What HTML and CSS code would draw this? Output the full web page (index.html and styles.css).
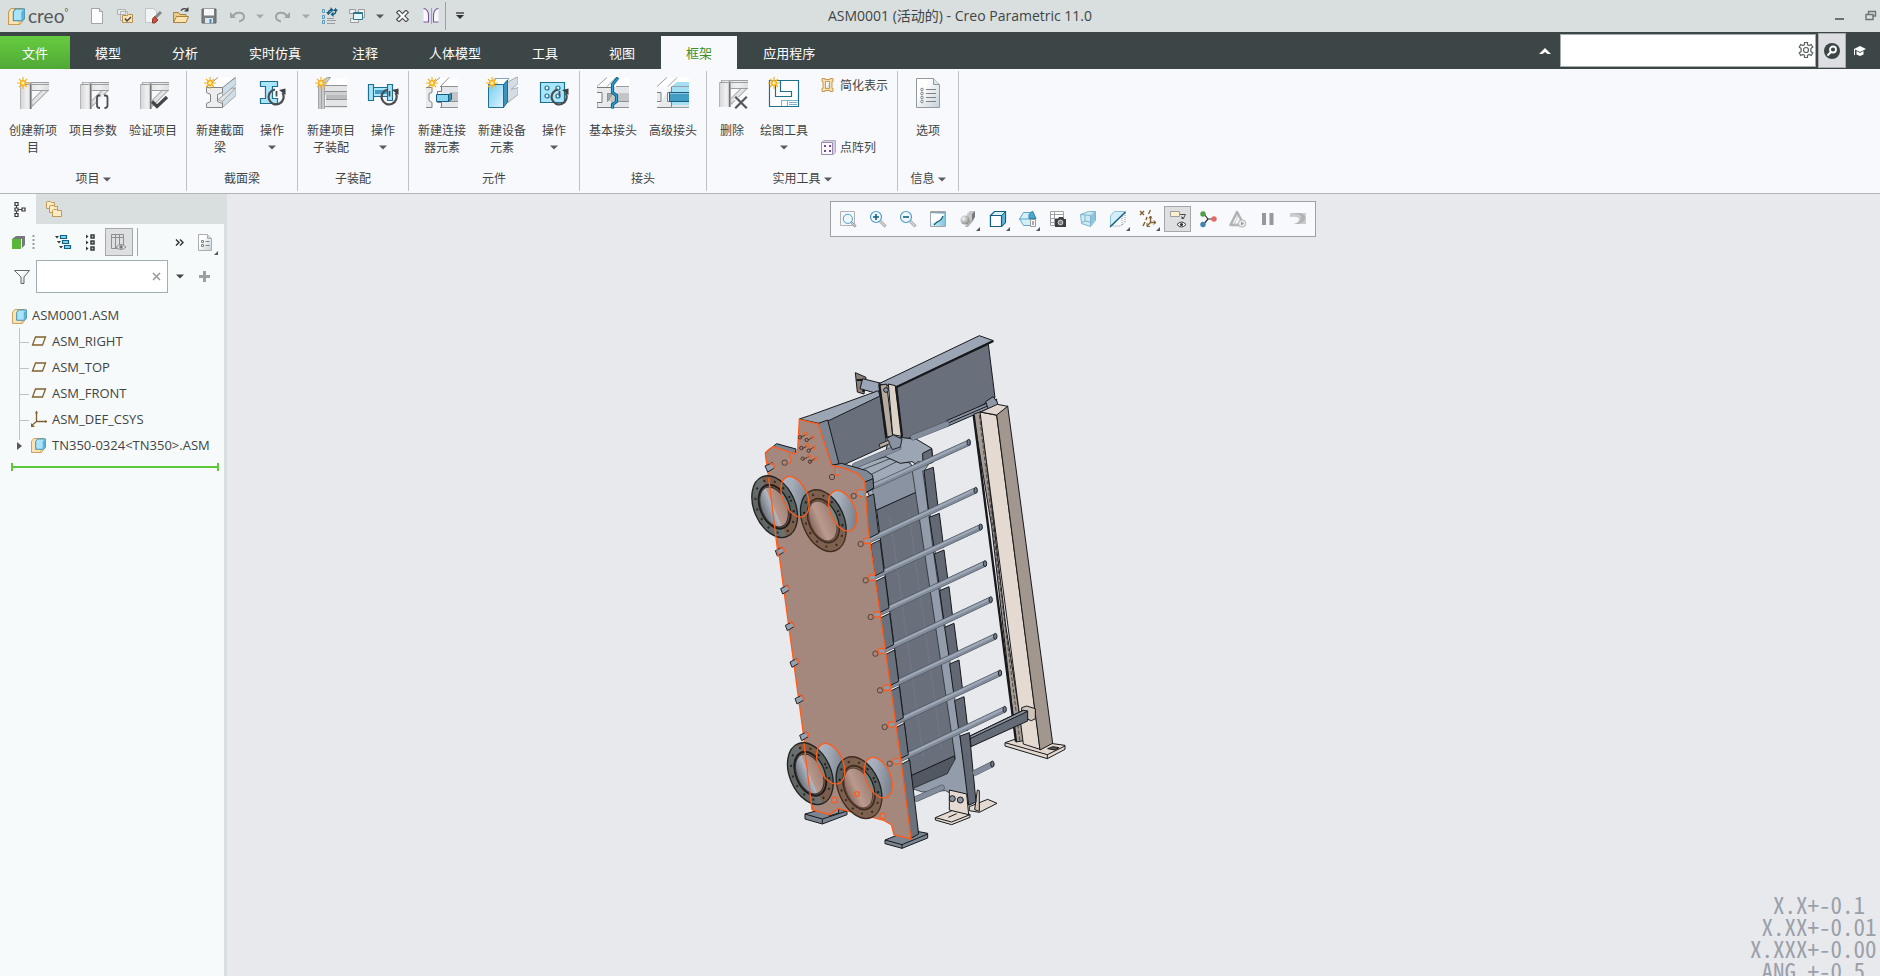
FILE: index.html
```html
<!DOCTYPE html>
<html lang="zh-CN">
<head>
<meta charset="utf-8">
<title>ASM0001 (活动的) - Creo Parametric 11.0</title>
<link rel="stylesheet" href="styles.css">
</head>
<body>
<svg class="defs" aria-hidden="true">
  <defs>
    <linearGradient id="steel" x1="0" x2="1" y1="0" y2="0"><stop offset="0" stop-color="#d4d5d6"/><stop offset=".6" stop-color="#f0f0f1"/><stop offset="1" stop-color="#dcdddf"/></linearGradient>
    <linearGradient id="aqua" x1="0" x2="1" y1="0" y2="1"><stop offset="0" stop-color="#74cdf3"/><stop offset="1" stop-color="#dff5fd"/></linearGradient>
    <linearGradient id="sky" x1="0" x2="1" y1="0" y2="0"><stop offset="0" stop-color="#e4f5fb"/><stop offset="1" stop-color="#7fc4de"/></linearGradient>
    <linearGradient id="paper" x1="0" x2="1" y1="0" y2="1"><stop offset=".3" stop-color="#fff"/><stop offset="1" stop-color="#c4d0da"/></linearGradient>
    <radialGradient id="ball" cx=".35" cy=".35" r=".7"><stop offset="0" stop-color="#f4f4f5"/><stop offset="1" stop-color="#88898b"/></radialGradient>
    <linearGradient id="pipe" x1="0" x2="1" y1="0" y2="1"><stop offset="0" stop-color="#b3bbc8"/><stop offset=".4" stop-color="#a4acb9"/><stop offset="1" stop-color="#69717c"/></linearGradient>
    <linearGradient id="bore" x1="0" x2="1" y1="0" y2="0"><stop offset="0" stop-color="#69717c"/><stop offset=".45" stop-color="#b0b7c2"/><stop offset=".5" stop-color="#b8978b"/><stop offset="1" stop-color="#9f8177"/></linearGradient>
    <linearGradient id="bore2" x1="0" x2="1" y1="0" y2="0"><stop offset="0" stop-color="#8a6a60"/><stop offset=".4" stop-color="#bb9a8e"/><stop offset="1" stop-color="#9c7e74"/></linearGradient>
    <linearGradient id="ring" x1="0" x2="1" y1="0" y2="0"><stop offset="0" stop-color="#5d6564"/><stop offset=".47" stop-color="#6b7271"/><stop offset=".5" stop-color="#7a5d4b"/><stop offset="1" stop-color="#7d604e"/></linearGradient>
    <clipPath id="nozzles"><ellipse cx="165" cy="530" rx="37" ry="64" transform="rotate(-23 165 530)"/><ellipse cx="308" cy="572" rx="37" ry="64" transform="rotate(-23 308 572)"/></clipPath>
    <symbol id="star" viewBox="0 0 12 12"><path d="M6 0v12M0 6h12M2 2l8 8M10 2l-8 8" stroke="#f9b21d" stroke-width="1.200"/><circle cx="6" cy="6" r="2.500" fill="#ffd84a" stroke="#f7a31a"/><circle cx="6" cy="6" r="1.200" fill="#fff3a8"/></symbol>
    <symbol id="frame" viewBox="0 0 32 32"><path d="M14.500 24L25 13.500h6L15 29.500z" fill="#e2e3e5" stroke="#8f9193"/><path d="M6 5.500h26v8H13z" fill="url(#steel)"/><path d="M13 7.500h19M14 13.500h18M5 5.500h27" stroke="#9b9da0" fill="none"/><path d="M3.500 32V8l3-2.500h8V32" fill="url(#steel)" stroke="#b3b5b7"/><path d="M3.500 7.500h8l3-2" fill="none" stroke="#9b9da0"/><path d="M13.500 7v25" stroke="#717375" stroke-width="1.400"/></symbol>
    <symbol id="rotate" viewBox="0 0 19 19"><path d="M8 2.500A7.500 7.500 0 1 0 15.500 6" fill="none" stroke="#4b4d4f" stroke-width="2.200"/><path d="M9.500 9.500V4" stroke="#4b4d4f" stroke-width="1.800"/><path d="M12 3l6.500-1.500V8z" fill="#3f4143"/></symbol>
    <symbol id="asm" viewBox="0 0 16 16"><path d="M.5 3.500L3 .5h11v11L11 15.500H.5z" fill="#fbe3b5" stroke="#c79c52"/><path d="M10.500 15.500V12" stroke="#d9b068" fill="none"/><path d="M5 3.500L7 1h8.500v9L13 12H5z" fill="#a9e4fb" stroke="#3b8bab"/><path d="M12.500 12V3.500L15.500 1v9z" fill="#5fb2d6"/></symbol>
    <symbol id="plane" viewBox="0 0 16 12"><path d="M4.500 2h10l-3 8H1.500z" fill="none" stroke="#80622e" stroke-width="1.300"/></symbol>
    <symbol id="tri" viewBox="0 0 8 5"><path d="M0 .5h8L4 4.500z" fill="currentColor"/></symbol>
    <symbol id="lens" viewBox="0 0 18 18"><path d="M11 11l5.500 5.500" stroke="#9c9ea0" stroke-width="3"/><path d="M11 11l5 5" stroke="#dcdddf" stroke-width="1.200"/><circle cx="7" cy="7" r="5.500" fill="#eef8fd" stroke="#4f9cc4" stroke-width="1.200"/></symbol>
    <symbol id="corner" viewBox="0 0 4 4"><path d="M4 0v4H0z" fill="#55575a"/></symbol>
  </defs>
</svg>

<header class="titlebar">
  <div class="brand"><svg width="17" height="17"><use href="#asm"/></svg><span>creo<sup>°</sup></span></div>
  <div class="quick">
    <button aria-label="新建"><svg width="16" height="18" viewBox="0 0 16 18"><path d="M2.500 1.500h8l3 3v12h-11z" fill="#fff" stroke="#a0a5a7"/><path d="M10.500 1.500v3h3" fill="#dfe3e5" stroke="#a0a5a7"/></svg></button>
    <button aria-label="打开"><svg width="18" height="18" viewBox="0 0 18 18"><path d="M1.500 2.500h8v5h-8zM4.500 4.500h7v9h-7z" fill="#e8eaea" stroke="#b0b4b6"/><path d="M6.500 8.500h5l1-1h4v8h-10z" fill="#fae3b4" stroke="#b8924f"/><path d="M9 11.500l2 2.500 4-4" fill="none" stroke="#3a3c3e" stroke-width="1.300"/></svg></button>
    <button aria-label="拭除"><svg width="18" height="18" viewBox="0 0 18 18"><path d="M1.500 1.500h8l3 3v11h-11z" fill="#f3f4f4" stroke="#c0c4c6"/><path d="M17 5l-6 6" stroke="#85888a" stroke-width="3"/><path d="M10.500 9.500l3.500 3.500-3 3H8.500v-4z" fill="#c9503f" stroke="#8d3a2f"/></svg></button>
    <button aria-label="打开文件夹"><svg width="18" height="18" viewBox="0 0 18 18"><path d="M1.500 15.500v-10h5l1.500 2h6v2" fill="#eccb86" stroke="#a8823f"/><path d="M1.500 15.500l3-6h12l-2.500 6z" fill="#fce3ae" stroke="#a8823f"/><path d="M9 3.500c2-2.500 5-2.500 6.500-.5" fill="none" stroke="#3d3f41" stroke-width="1.300"/><path d="M16.500 0v4.500H12z" fill="#3d3f41"/></svg></button>
    <button aria-label="保存"><svg width="18" height="18" viewBox="0 0 18 18"><path d="M2 2h14v14H2z" fill="#7c7f81" stroke="#606365"/><path d="M4 2h10v6.500H4z" fill="#f6f7f7"/><path d="M5 11h8v5H5z" fill="#d9e8ef"/><path d="M9.500 12h2v4h-2z" fill="#4e8cad"/></svg></button>
    <button class="off" aria-label="撤消"><svg width="18" height="14" viewBox="0 0 18 14"><path d="M5 7c3-5 11-4 11 1 0 3-3 4-5 4.500" fill="none" stroke="#9ea3a4" stroke-width="2"/><path d="M2 3v6h6z" fill="#9ea3a4"/></svg></button>
    <button class="more off" aria-label="撤消列表"><svg width="8" height="5"><use href="#tri"/></svg></button>
    <button class="off" aria-label="重做"><svg width="18" height="14" viewBox="0 0 18 14"><path d="M13 7C10 2 2 3 2 8c0 3 3 4 5 4.500" fill="none" stroke="#9ea3a4" stroke-width="2"/><path d="M16 3v6h-6z" fill="#9ea3a4"/></svg></button>
    <button class="more off" aria-label="重做列表"><svg width="8" height="5"><use href="#tri"/></svg></button>
    <button aria-label="重新生成"><svg width="18" height="18" viewBox="0 0 18 18"><path d="M2.500 2.500h2v3h-2zM2.500 8.500h2v3h-2zM2.500 13.500h2v3h-2z" fill="#bfe6f6" stroke="#5a9cba"/><path d="M7 11.500h7M7 13.500h9M7 16.500h8" stroke="#999c9e"/><path d="M8.500 7.500c-1-3 1-4.500 3-4.500M15.500 3c1 3-1 4.500-3 4.500" fill="none" stroke="#145f80" stroke-width="1.500"/><path d="M10.500 0l3 3-3 3zM13.500 4.500l-3 3 3 2.500zM6 5h5L8.500 8zM13 4h5l-2.500-3z" fill="#145f80"/></svg></button>
    <button aria-label="窗口"><svg width="18" height="18" viewBox="0 0 18 18"><path d="M1.500 2.500h6v4h-6zM10.500 2.500h6v8h-6zM2.500 11.500h8v4h-8z" fill="#eef0f0" stroke="#999da0"/><path d="M5.500 5.500h9v7h-9z" fill="#e4f5fc" stroke="#2f7695"/><path d="M5.500 6.500h9" stroke="#2f7695"/></svg></button>
    <button class="more" aria-label="窗口列表"><svg width="8" height="5"><use href="#tri"/></svg></button>
    <button aria-label="关闭"><svg width="14" height="12" viewBox="0 0 14 12"><path d="M3 2.500l7 7M10 2.500l-7 7" stroke="#4a4d4f" stroke-width="4.500" stroke-linecap="square"/><path d="M3 2.500l7 7M10 2.500l-7 7" stroke="#fff" stroke-width="2.200" stroke-linecap="square"/></svg></button>
    <button aria-label="镜像"><svg width="18" height="18" viewBox="0 0 18 18"><path d="M1.500 1.500c3 0 5 3 5 7v6.500h-5M16.500 1.500c-3 0-5 3-5 7v6.500h5" fill="#fbf8ff" stroke="#7a52a3" stroke-width="1.100"/><path d="M9.500 1v16" stroke="#a0a3a5"/></svg></button>
    <button class="custom" aria-label="自定义快速访问工具栏"><svg width="10" height="8" viewBox="0 0 10 8"><path d="M1 1h8" stroke="#2e3032" stroke-width="1.300"/><path d="M1 3h8L5 7z" fill="#2e3032"/></svg></button>
  </div>
  <h1>ASM0001 (活动的) - Creo Parametric 11.0</h1>
  <div class="window">
    <button aria-label="最小化"><svg width="10" height="12" viewBox="0 0 10 12"><path d="M0 9h9" stroke="#6d7173" stroke-width="2"/></svg></button>
    <button aria-label="还原"><svg width="12" height="12" viewBox="0 0 12 12"><path d="M3.500 4V1.500h7v4.500H8" fill="none" stroke="#6d7173" stroke-width="1.400"/><path d="M1 4.500h7v5H1z" fill="none" stroke="#6d7173" stroke-width="1.400"/></svg></button>
  </div>
</header>

<nav class="tabs">
  <button class="tab file">文件</button>
  <button class="tab">模型</button>
  <button class="tab">分析</button>
  <button class="tab">实时仿真</button>
  <button class="tab">注释</button>
  <button class="tab">人体模型</button>
  <button class="tab">工具</button>
  <button class="tab">视图</button>
  <button class="tab active">框架</button>
  <button class="tab">应用程序</button>
  <div class="tools">
    <button class="fold" aria-label="折叠功能区"><svg width="12" height="8" viewBox="0 0 12 8"><path d="M0 7l6-6 6 6H8.500L6 5 3.500 7z" fill="#fff"/></svg></button>
    <div class="search">
      <input type="text" aria-label="命令搜索">
      <svg width="18" height="18" viewBox="0 0 18 18"><path d="M7.500 1.500h3v2.200l1.600.8 2.100-1 1.600 2.600-1.900 1.400v3l1.900 1.400-1.600 2.600-2.100-1-1.600.8v2.200h-3v-2.200l-1.600-.8-2.100 1-1.600-2.600 1.900-1.400v-3L2.200 6.100l1.600-2.600 2.100 1 1.600-.8z" fill="#fff" stroke="#5a6061" stroke-width="1.200"/><circle cx="9" cy="9" r="2.500" fill="none" stroke="#5a6061" stroke-width="1.200"/></svg>
    </div>
    <button class="find" aria-label="搜索"><svg width="16" height="16" viewBox="0 0 16 16"><circle cx="8" cy="8" r="8" fill="#3d4647"/><circle cx="9" cy="6.500" r="3" fill="none" stroke="#fff" stroke-width="1.800"/><path d="M7 9l-3.500 3.500" stroke="#fff" stroke-width="2"/></svg></button>
    <button class="learn" aria-label="学习"><svg width="12" height="10" viewBox="0 0 12 10"><path d="M6 0l6 3-6 3-6-3z" fill="#fff"/><path d="M2.500 5v3.500L6 10l3.500-1.500V5L6 7zM0 3h1v6H0z" fill="#fff"/></svg></button>
  </div>
</nav>

<section class="ribbon">
  <div class="group">
    <div class="items">
      <button class="cmd"><svg viewBox="0 0 32 32"><use href="#frame" width="32" height="32"/><use href="#star" width="12" height="12"/></svg><span>创建新项<br>目</span></button>
      <button class="cmd"><svg viewBox="0 0 32 32"><use href="#frame" width="32" height="32"/><path d="M21 18h10v14H19v-8z" fill="#f8f9fc" opacity=".8"/><path d="M23.500 18.500h-1.500q-2 0-2 2.500v7.500q0 2.500 3 2.500M27 18.500h1.500q2 0 2 2.500v7.500q0 2.500-3 2.500" fill="none" stroke="#4b4d4f" stroke-width="1.800"/></svg><span>项目参数</span></button>
      <button class="cmd"><svg viewBox="0 0 32 32"><use href="#frame" width="32" height="32"/><path d="M15 24.500l5 5L30 20" fill="none" stroke="#434547" stroke-width="3.200"/></svg><span>验证项目</span></button>
    </div>
    <button class="name">项目<svg width="8" height="5"><use href="#tri"/></svg></button>
  </div>
  <div class="group">
    <div class="items">
      <button class="cmd"><svg viewBox="0 0 32 32"><path d="M18.500 10.500L32 .5v7l-6 5 6-2v8L18.500 30.500z" fill="#cfdfe9" stroke="#a3a8ac"/><path d="M18.500 10.500L31 .5H14l-12 10z" fill="#fff"/><path d="M2 10.500L14 .5M18.500 10.500L31 .5" stroke="#8f9496"/><path d="M14 22.500l14-11.500 3 .5-12.500 13z" fill="#e2e3e5" stroke="#a0a3a5"/><path d="M2.500 10.500h16v5l-5 2v7l5 2v4h-16v-4l4-2v-7l-4-2z" fill="#ededef" stroke="#808284"/><use href="#star" width="12" height="12"/></svg><span>新建截面<br>梁</span></button>
      <button class="cmd narrow"><svg viewBox="0 0 32 32"><path d="M4.500 4.500h17v5h-5v12h5v5h-17v-5h5v-12h-5z" fill="#a9e6fc" stroke="#1f6f90" stroke-width="1.200"/><use href="#rotate" x="11" y="10" width="19" height="19"/></svg><span>操作<svg width="8" height="5"><use href="#tri"/></svg></span></button>
    </div>
    <div class="name">截面梁</div>
  </div>
  <div class="group">
    <div class="items">
      <button class="cmd"><svg viewBox="0 0 32 32"><path d="M10 1h22v7H10z" fill="#fff"/><path d="M9 8h23v6H9zM11 22h21v9H11z" fill="#e4e5e7"/><path d="M9 8.500h23M9 14.500h23M11 22.500h21M10 29.500h22" stroke="#8f9193"/><path d="M9 15h23v3H9z" fill="#cfd0d2"/><path d="M11 18h21v4H11z" fill="#b9bbbd"/><path d="M3.500 32V6l9-5.500h3L9.500 8v24" fill="#c9cacc" stroke="#a0a2a4"/><path d="M6.500 32V7" stroke="#a0a2a4"/><use href="#star" width="12" height="12"/></svg><span>新建项目<br>子装配</span></button>
      <button class="cmd narrow"><svg viewBox="0 0 32 32"><path d="M1.500 7.500h5v16h-5zM20.500 7.500h5v16h-5z" fill="#a9e6fc" stroke="#1f6f90" stroke-width="1.200"/><path d="M6.500 10.500h14v9h-14z" fill="#a9e6fc" stroke="#1f6f90"/><path d="M8 13h12v4H8z" fill="#3f9fc6"/><use href="#rotate" x="13" y="10" width="19" height="19"/></svg><span>操作<svg width="8" height="5"><use href="#tri"/></svg></span></button>
    </div>
    <div class="name">子装配</div>
  </div>
  <div class="group">
    <div class="items">
      <button class="cmd"><svg viewBox="0 0 32 32"><path d="M0 9.500L12 1h20v8.500z" fill="#fff"/><path d="M15 9.500h17v21H15z" fill="#e4e8ec"/><path d="M14 9.500h18M18 24.500h14M14 30.500h18M14.500 9.500L23 .5M3 9.500L14 .5" stroke="#8f9193"/><path d="M0 10.500h6v5l-3 1v7l3 2v5H0" fill="#e9eaec" stroke="#808284"/><path d="M15.500 9.500v5h-4v11h4v5" fill="none" stroke="#77797b"/><path d="M24 15h8v9h-8z" fill="#c3c5c7"/><path d="M10.500 17.500h12v7h-12z" fill="#8bd6f3" stroke="#175f80"/><path d="M22.500 17.500l3-1v6l-3 2z" fill="#4192b7" stroke="#175f80"/><use href="#star" width="12" height="12"/></svg><span>新建连接<br>器元素</span></button>
      <button class="cmd"><svg viewBox="0 0 32 32"><path d="M20 6L30 .5h2v6l-7 6 7-2v7l-10 8z" fill="#d5dde4" stroke="#a9aeb2"/><path d="M2.500 7.500L9 1.500h14l-5 6z" fill="#fff" stroke="#7fa9ba"/><path d="M2.500 7.500h15v23h-15z" fill="url(#aqua)" stroke="#1f6f90"/><path d="M17.500 7.500l4-4.500v22l-4 5.500z" fill="#3b93bc" stroke="#1f6f90"/><use href="#star" width="12" height="12"/></svg><span>新建设备<br>元素</span></button>
      <button class="cmd narrow"><svg viewBox="0 0 32 32"><path d="M2.500 5.500h24v20h-24z" fill="#a9e6fc" stroke="#1f6f90" stroke-width="1.200"/><g fill="#e6f8fe" stroke="#1f6f90" stroke-width="1.200"><circle cx="9" cy="11" r="2"/><circle cx="20" cy="11" r="2"/><circle cx="9" cy="19" r="2"/><circle cx="20" cy="19" r="2"/></g><use href="#rotate" x="12" y="10" width="19" height="19"/></svg><span>操作<svg width="8" height="5"><use href="#tri"/></svg></span></button>
    </div>
    <div class="name">元件</div>
  </div>
  <div class="group">
    <div class="items">
      <button class="cmd"><svg viewBox="0 0 32 32"><path d="M0 9.500L10 .5h22v9z" fill="#fff"/><path d="M0 9.500L10 .5M10 9.500L19 .5M19 9.500h13" stroke="#9b9da0"/><path d="M17 10h15v20H17z" fill="#e2e6ea"/><path d="M0 10.500h15V30.500H0v-5h5V15.500H0" fill="#e9eaec" stroke="#77797b"/><path d="M10 16h22v8H10z" fill="#c3c5c7"/><path d="M18 24.500h14M15 30.500h17M10.500 24.500l5-8h-5z" stroke="#8f9193" fill="#a5a7a9"/><path d="M21 .5l-5.500 7v8l4 3v6l-4 3v4" fill="none" stroke="#115f84" stroke-width="3.200"/><path d="M21 1l-5.500 6.500v8l4 3v6l-4 3v4" fill="none" stroke="#2ba3d8" stroke-width="1.200"/></svg><span>基本接头</span></button>
      <button class="cmd"><svg viewBox="0 0 32 32"><path d="M0 9.500L10 .5h22v9z" fill="#fff"/><path d="M0 9.500L10 .5M11 9.500L20 .5" fill="none" stroke="#9b9da0"/><path d="M0 15.500h4v9H0M0 30.500h14.500v-6h-4v-9h4v-6" fill="#e9eaec" stroke="#808284"/><path d="M15 10h17v20H15z" fill="#e2e6ea"/><path d="M15 9l5-4h12v10H15zM15 24h17v4H15z" fill="#a5dff4"/><path d="M12.500 16.500h20v8h-20z" fill="#439ec5"/><path d="M32 15.500H12.500v9H32" fill="none" stroke="#175f80"/><path d="M15 9.500h17M15 30.500h17" stroke="#90a0a8"/></svg><span>高级接头</span></button>
    </div>
    <div class="name">接头</div>
  </div>
  <div class="group">
    <div class="items">
      <button class="cmd narrow"><svg viewBox="0 0 32 32"><use href="#frame" y="-2" width="32" height="32"/><path d="M20 21l10 10M30 21L20 31" stroke="#f8f9fc" stroke-width="4.500"/><path d="M20 20.500l10 10M30 20.500l-10 10" stroke="#55575a" stroke-width="2.200" stroke-linecap="square"/></svg><span>删除</span></button>
      <button class="cmd"><svg viewBox="0 0 32 32"><path d="M1.500 3.500h29v26h-29z" fill="#fff" stroke="#1f6f90" stroke-width="1.200"/><path d="M7.500 3.500h5v11h11v5h-16z" fill="#fff" stroke="#1f6f90" stroke-width="1.200"/><path d="M13 23.500h17M13.500 24v5M19.500 24v5M21 25.500h8M21 27.500h8" stroke="#7fb3ca"/><use href="#star" width="12" height="12"/></svg><span>绘图工具<svg width="8" height="5"><use href="#tri"/></svg></span></button>
      <div class="small">
        <button><svg width="16" height="16" viewBox="0 0 16 16"><path d="M2 1.500h3v1h5v-1h3v3h-1v7h1v3h-3v-1H5v1H2v-3h1v-7H2z" fill="#f8dfae" stroke="#c49a52"/><path d="M5.500 4.500h4v7h-4z" fill="url(#paper)" stroke="#c49a52"/></svg>简化表示</button>
        <button><svg width="16" height="16" viewBox="0 0 16 16"><path d="M1.500 3.500l2-2h12v12l-2 2h-12z" fill="#d6cfe3" stroke="#b5acc4"/><path d="M1.500 3.500h11v12h-11z" fill="#fbf9ff" stroke="#9a8eae"/><path d="M4 6h2v2H4zM9 6h2v2H9zM4 11h2v2H4zM9 11h2v2H9z" fill="#6f479d"/></svg>点阵列</button>
      </div>
    </div>
    <button class="name">实用工具<svg width="8" height="5"><use href="#tri"/></svg></button>
  </div>
  <div class="group">
    <div class="items">
      <button class="cmd mid"><svg viewBox="0 0 32 32"><path d="M4.500 1.500h17l6 6v23h-23z" fill="url(#paper)" stroke="#94999c"/><path d="M21.500 1.500v6h6" fill="#dde4ea" stroke="#94999c"/><g fill="#fff" stroke="#808284"><circle cx="10" cy="12.500" r="1.300"/><circle cx="10" cy="16.500" r="1.300"/><circle cx="10" cy="20.500" r="1.300"/><circle cx="10" cy="24.500" r="1.300"/></g><path d="M14 12.500h10M14 16.500h10M14 20.500h10M14 24.500h10" stroke="#808284"/></svg><span>选项</span></button>
    </div>
    <button class="name">信息<svg width="8" height="5"><use href="#tri"/></svg></button>
  </div>
</section>

<main class="work">
  <aside class="panel">
    <div class="paneltabs">
      <button class="on" aria-label="模型树"><svg width="12" height="17" viewBox="0 0 12 17"><path d="M2.500 4v10M4 8.500h4" stroke="#4a4c4e"/><path d="M1 1.500h3v3H1zM1 7h3v3H1zM1 12.500h3v3H1zM8 7h3v3H8z" fill="#fff" stroke="#333537" stroke-width="1.200"/></svg></button>
      <button aria-label="文件夹浏览器"><svg width="18" height="18" viewBox="0 0 18 18"><g fill="#fdebc4" stroke="#c09a58"><path d="M1.500 2l1-.5h3l1 1h3v6h-8z"/><path d="M4.500 6l1-.5h3l1 1h3v6h-8z"/><path d="M7.500 10.500l1-1h3l1 1h4v6h-9z"/></g></svg></button>
    </div>
    <div class="paneltools">
      <button class="cube" aria-label="显示"><svg width="14" height="14" viewBox="0 0 14 14"><path d="M0 4l4-3h9v9l-3 3V4z" fill="#77797b"/><path d="M0 4h9v10H0z" fill="#58b639"/></svg></button>
      <svg class="grip" width="3" height="14" viewBox="0 0 3 14"><path d="M1.500 0v14" stroke="#999c9e" stroke-width="2" stroke-dasharray="2 2"/></svg>
      <button aria-label="全部展开"><svg width="17" height="16" viewBox="0 0 17 16"><path d="M0 2h4L2 4.500zM2 7h4L4 9.500zM4 12h4l-2 2.500z" fill="#333537"/><path d="M5.500 1.500h6v3h-6zM7.500 6.500h6v3h-6zM9.500 11.500h6v3h-6z" fill="#7fd4f2" stroke="#145f80" stroke-width="1.200"/></svg></button>
      <button aria-label="全部折叠"><svg width="10" height="18" viewBox="0 0 10 18"><path d="M0 1.500l2.500 2L0 5.500zM0 7.500l2.500 2-2.500 2zM0 13.500l2.500 2-2.500 2z" fill="#333537"/><path d="M5 2h3v3H5zM5 8h3v3H5zM5 14h3v3H5z" fill="#bfc1c3" stroke="#3a3c3e" stroke-width="1.500"/></svg></button>
      <button class="pressed" aria-label="树列"><svg width="18" height="18" viewBox="0 0 18 18"><path d="M1.500 1.500h12v14h-12zM1.500 4.500h12M5.500 2v13M9.500 2v13" fill="none" stroke="#8c8f91"/><path d="M6 14q5-5 10 0-5 5-10 0z" fill="#e0e1e3" stroke="#8c8f91"/><circle cx="11" cy="14" r="1.700" fill="#77797b"/></svg></button>
      <i class="rule"></i>
      <button class="chev" aria-label="更多"><svg width="9" height="7" viewBox="0 0 9 7"><path d="M1 .5l3 3-3 3M5 .5l3 3-3 3" fill="none" stroke="#333537" stroke-width="1.500"/></svg></button>
      <button class="badge" aria-label="设置"><svg width="14" height="17" viewBox="0 0 14 17"><path d="M.5.5h9l4 4v12H.5z" fill="url(#paper)" stroke="#a9aeb1"/><path d="M9.500.5v4h4" fill="#d0dae2" stroke="#a9aeb1"/><path d="M3.500 6.500h2v2h-2zM3.500 10.500h2v2h-2zM7.500 7.500h4M7.500 11.500h4" fill="none" stroke="#808284"/></svg><svg class="corner" width="4" height="4"><use href="#corner"/></svg></button>
    </div>
    <div class="filter">
      <svg width="16" height="16" viewBox="0 0 16 16"><path d="M.5 1.500h15L10 8v6.500H7V8z" fill="url(#paper)" stroke="#65686a"/></svg>
      <div class="field"><input type="text" aria-label="过滤"><button aria-label="清除"><svg width="9" height="9" viewBox="0 0 9 9"><path d="M1 1l7 7M8 1L1 8" stroke="#96999b" stroke-width="1.500"/></svg></button></div>
      <button aria-label="过滤选项"><svg width="8" height="5"><use href="#tri"/></svg></button>
      <button aria-label="添加"><svg width="11" height="11" viewBox="0 0 11 11"><path d="M5.500 0v11M0 5.500h11" stroke="#9da0a2" stroke-width="3"/></svg></button>
    </div>
    <ul class="tree">
      <li class="root"><svg width="15" height="15"><use href="#asm"/></svg>ASM0001.ASM
        <ul>
          <li><svg width="16" height="12"><use href="#plane"/></svg>ASM_RIGHT</li>
          <li><svg width="16" height="12"><use href="#plane"/></svg>ASM_TOP</li>
          <li><svg width="16" height="12"><use href="#plane"/></svg>ASM_FRONT</li>
          <li><svg width="16" height="16" viewBox="0 0 16 16"><path d="M5.500 0v10.500H16M5.500 10.500L0 15" fill="none" stroke="#80622e" stroke-width="1.300"/><path d="M4 2.500L5.500 0 7 2.500zM0 12v4h4zM14 9l2 1.500-2 1.500z" fill="#80622e"/></svg>ASM_DEF_CSYS</li>
          <li class="branch"><svg width="15" height="15"><use href="#asm"/></svg>TN350-0324&lt;TN350&gt;.ASM</li>
        </ul>
      </li>
    </ul>
    <div class="insert"></div>
  </aside>

  <section class="canvas">
    <div class="viewbar">
      <button aria-label="重新调整"><svg width="18" height="18" viewBox="0 0 18 18"><path d="M1.500 1.500h14v14h-14z" fill="#f4f7f9" stroke="#b0b3b5"/><use href="#lens" x="3" y="3" width="15" height="15"/></svg></button>
      <button aria-label="放大"><svg width="18" height="18" viewBox="0 0 18 18"><use href="#lens" width="18" height="18"/><path d="M4 7h6M7 4v6" stroke="#145f80" stroke-width="1.600"/></svg></button>
      <button aria-label="缩小"><svg width="18" height="18" viewBox="0 0 18 18"><use href="#lens" width="18" height="18"/><path d="M4 7h6" stroke="#145f80" stroke-width="1.600"/></svg></button>
      <button aria-label="重画"><svg width="18" height="18" viewBox="0 0 18 18"><path d="M1.500 1.500h15v15h-15z" fill="url(#sky)" stroke="#a0a5a8"/><path d="M2 2.500h14" stroke="#9ca1a4"/><path d="M2 4h13q-1 8-8 8l-5 1z" fill="#fff"/><path d="M14 6q-2 5-6 6l-3 3" fill="none" stroke="#145f80" stroke-width="1.300"/></svg></button>
      <button class="badge" aria-label="显示样式"><svg width="18" height="18" viewBox="0 0 18 18"><path d="M8 4l3-3h5v6l-2 3H8z" fill="#c4c6c8"/><path d="M13 4l3-3v6l-2 3h-1z" fill="#77797b"/><path d="M10 10h5l-6 7H6z" fill="#b0b2b4"/><circle cx="6" cy="10" r="4.500" fill="url(#ball)"/></svg><svg class="corner" width="4" height="4"><use href="#corner"/></svg></button>
      <button class="badge" aria-label="已保存方向"><svg width="18" height="18" viewBox="0 0 18 18"><path d="M1.500 5.500l4-4h11v11l-4 4h-11z" fill="#d9f0fa" stroke="#145f80" stroke-width="1.200"/><path d="M12.500 5.500l4-4v11l-4 4z" fill="#5fb2d6" stroke="#145f80"/><path d="M1.500 5.500h11v11h-11z" fill="#fff" stroke="#145f80" stroke-width="1.200"/></svg><svg class="corner" width="4" height="4"><use href="#corner"/></svg></button>
      <button class="badge" aria-label="视图管理器"><svg width="18" height="18" viewBox="0 0 18 18"><path d="M4.500 2.500h8v13h-8L.5 9z" fill="#d4effa" stroke="#5ba8c8"/><path d="M.5 9H13" stroke="#5ba8c8"/><path d="M10 8.500V4.500L13.500 1l3.500 7.500z" fill="#4aa8d0" stroke="#2f82a7"/><path d="M11.500 9.500h5v7h-5z" fill="#fff" stroke="#999c9e"/><path d="M13 12h2M13 14h2" stroke="#55585a"/></svg><svg class="corner" width="4" height="4"><use href="#corner"/></svg></button>
      <button aria-label="视图快照"><svg width="18" height="18" viewBox="0 0 18 18"><path d="M1.500 1.500h13v14h-13zM1.500 4.500h13M1.500 8.500h13M1.500 12.500h13M5.500 2v13" fill="#fff" stroke="#a0a3a5"/><path d="M6 9h3l1-2h4l1 2h2v8H6z" fill="#3c3e40"/><circle cx="11.500" cy="12.500" r="2.400" fill="#85888a" stroke="#d6d7d8"/></svg></button>
      <button aria-label="透视图"><svg width="18" height="18" viewBox="0 0 18 18"><path d="M1.500 4.500l8-3h7v9l-5 6-9-3z" fill="#cde9f4" stroke="#7fb6cd"/><path d="M1.500 4.500l10 1 5-4M11.500 5.500v11M6 5v6l-4 2M6 11l5 1" fill="none" stroke="#7fb6cd"/><path d="M12 6l4-4v8l-4 5z" fill="#8cc5db"/></svg></button>
      <button class="badge" aria-label="截面"><svg width="18" height="18" viewBox="0 0 18 18"><path d="M1.500 5.500l4-4h11L1.500 16z" fill="#d2eefa" stroke="#8fc2d7"/><path d="M16 3v9l-4 4H3M13 6v9" fill="none" stroke="#909396" stroke-dasharray="1 1"/><path d="M16.500 2L1 17" stroke="#145f80" stroke-width="1.400"/></svg><svg class="corner" width="4" height="4"><use href="#corner"/></svg></button>
      <button class="badge" aria-label="基准显示过滤器"><svg width="18" height="18" viewBox="0 0 18 18"><path d="M1 1l4 4M5 1L1 5M11.500 0l-2 4M8 7l-1 3M6 12l-2 4M11.500 6v6.500h5.500M11.500 12.500L8 16" fill="none" stroke="#80622e" stroke-width="1.400"/><path d="M10 8.500L11.500 6 13 8.500M14.500 10.500l2.500 2-2.500 2M8 13v3.500h3" fill="none" stroke="#80622e"/></svg><svg class="corner" width="4" height="4"><use href="#corner"/></svg></button>
      <button class="pressed" aria-label="注释显示"><svg width="18" height="18" viewBox="0 0 18 18"><path d="M1.500 1.500h9v5h-9z" fill="#fff0cc" stroke="#999b9d"/><path d="M11 4.500h5.500L14 9" fill="none" stroke="#4a4c4e"/><path d="M12.500 6v3h3z" fill="#4a4c4e"/><path d="M8 14.500q4.500-5 9 0-4.500 5-9 0z" fill="#fff" stroke="#333537"/><circle cx="12.500" cy="14.500" r="1.600" fill="#333537"/></svg></button>
      <button aria-label="旋转中心"><svg width="18" height="18" viewBox="0 0 18 18"><path d="M5 4l4 5h6M9 9l-5 6" fill="none" stroke="#2e3032" stroke-width="1.200"/><circle cx="4" cy="4" r="2.700" fill="#4f9f45"/><circle cx="15" cy="9" r="2.700" fill="#e06a66"/><circle cx="4" cy="14.500" r="2.700" fill="#4283b0"/></svg></button>
      <button aria-label="仿真"><svg width="18" height="18" viewBox="0 0 18 18"><path d="M8 2l7 13H1.500z" fill="none" stroke="#b0b3b5" stroke-width="2.500" stroke-linejoin="round"/><path d="M8 5v4l-3 5h6" fill="none" stroke="#c4c6c8"/><circle cx="13" cy="13.500" r="3.700" fill="#eceded" stroke="#b0b3b5"/><path d="M12 11.500l3 2-3 2z" fill="#999c9e"/></svg></button>
      <button aria-label="暂停"><svg width="18" height="18" viewBox="0 0 18 18"><path d="M5 3v12M12.500 3v12" stroke="#96999b" stroke-width="4"/></svg></button>
      <button aria-label="停止"><svg width="18" height="18" viewBox="0 0 18 18"><path d="M1 3h16v11H4q6-1 6-5-1-3-9-2z" fill="#cbcccd"/><path d="M1 4q12-1 11 4 0 4-6 6h3q7-2 7-6 0-5-8-5z" fill="#b0b2b4"/></svg></button>
    </div>

    <svg class="model" width="340" height="540" viewBox="0 0 1020 1620" role="img" aria-label="板式换热器装配模型">
      <g stroke="#17191c" stroke-width="3" stroke-linejoin="round">
        <!-- carrying beam -->
        <path d="M346 158l32 14-6 50-20-6z" fill="#8b8178"/>
        <path d="M350 180h20v36" fill="none" stroke-width="6"/>
        <path d="M368 176l60 15-8 32-60-17z" fill="#9aa5b8"/>
        <path d="M470 200L745 73l20 160-145 84-135 45z" fill="#6a707b"/>
        <path d="M415 192L718 47l42 15-290 138z" fill="#9ca5b3"/>
        <path d="M235 300L420 226l20 150-145 66z" fill="#6a707b"/>
        <path d="M178 297l30-10 207-75 5 16-175 84z" fill="#9ca5b3"/>
        <path d="M760 63L470 201" fill="none" stroke-width="6"/>
        <path d="M233 311l30-11 34 132-22 4z" fill="#7c8592"/>
        <path d="M418 196l22-4 18 155-18 6z" fill="#b5aaa0"/>
        <path d="M445 192l21 5 20 152-28-5z" fill="#ddd2c8"/>
        <path d="M418 194l22 160M468 198l18 152" fill="none" stroke-width="7"/>
        <circle cx="438" cy="210" r="7" fill="#8d97a6"/>
        <path d="M620 302l150-65v18l-150 65z" fill="#8992a0"/>
        <path d="M620 311l150-65" fill="none"/>
        <path d="M737 245l22-15 12 15 4 15-30 8z" fill="#8d97a6"/>
        <!-- support column -->
        <path d="M795 1268l35-12 145 20v12l-53 28-127-38z" fill="#e3d8cf"/>
        <path d="M795 1268l127 36 53-26M922 1304v12" fill="none"/>
        <path d="M700 283l22-8 75 640 54 347-23 4-73-646z" fill="#a79c93"/>
        <path d="M720 276l50 10 130 1002-50-16z" fill="#e5dad1"/>
        <path d="M770 284l33-26 135 1012-38 20z" fill="#a1978f"/>
        <path d="M722 276l50-23 31 6-33 26z" fill="#e3d8cf"/>
        <path d="M701 285l127 980" stroke-width="7"/>
        <path d="M718 285l60 495 62 485" stroke-dasharray="12 6" stroke-width="2" fill="none"/>
        <path d="M945 1290l-22-4 16-6 18 3z" fill="#5d5852"/>
        <!-- tie bar -->
        <path d="M845 1163l15-5 26 8v30l-12 6-29-12z" fill="#cfc4ba"/>
        <path d="M690 1248l160-77 13 2v30l-170 77z" fill="#646b76"/>
        <path d="M690 1248l160-77 13 3-173 82z" fill="#8b94a2"/>
        <!-- rear feet -->
        <path d="M688 1460l55-22 28 12-53 27-30-5z" fill="#e5dad1"/>
        <path d="M712 1410l6 2v62l-14-5z" fill="#cfc4ba"/>
        <path d="M586 1493l52-22 52 12v9l-55 22-49-14z" fill="#e5dad1"/>
        <path d="M586 1493l49 13 55-22M625 1492l25-11" fill="none"/>
        <!-- plate pack -->
        <path d="M345 440l112-37 55 28 33 80-135 60-30-60z" fill="#a1aab8"/>
        <path d="M360 452l105-42M380 470l100-50M410 570l-14-70" fill="none" stroke-width="2"/>
        <path d="M396 500l115-58 32 68-133 60z" fill="#8a93a1" stroke="none"/>
        <path d="M410 570l133-60 102 798-132 60z" fill="#69707c"/>
        <path d="M450 590l100 720M505 570l100 720" stroke="#6f7682" stroke-width="5" fill="none"/>
        <path d="M513 1367l132-60v32q-2 20-22 30l-106 40z" fill="#525862"/>
        <!-- movable plate -->
        <path d="M445 350l35 2 50 6 45 27 4 42-38 14-25-16-35 5-45-20z" fill="#9ba5b3"/>
        <path d="M548 400l27-14 4 40-30 8z" fill="#646b76"/>
        <path d="M515 440l20-16 30 10-12 18 106 792 30 210-72-42-70 4-30-10 105-45 24-45z" fill="#929cab" stroke-width="2"/>
        <path d="M552 452l28-10 15 128-29 5zM568 592l30-12 13 102-28 6zM583 702l29-12 13 100-27 6zM599 812l28-12 12 100-27 6zM614 922l28-12 13 100-27 6zM629 1032l28-12 12 100-27 6zM644 1142l28-12 12 100-27 6zM660 1248l28-10 20 208-22 10z" fill="#626974"/>
        <path d="M548 452l20 140M567 590l14 112M581 700l16 112M597 812l16 110" fill="none" stroke-width="2"/>
        <path d="M628 1410l52 12 6 62-58-14z" fill="#e5dad1"/>
        <circle cx="637" cy="1436" r="9" fill="#8992a0"/><circle cx="661" cy="1440" r="9" fill="#8992a0"/>
      </g>

      <!-- tightening bolts -->
      <g fill="none" stroke-linecap="round">
        <path d="M355 519L683 370M384 662L703 513M398 772L718 623M412 882L731 733M427 992L748 841M442 1102L762 951M456 1212L776 1061M470 1322L790 1170M530 1436l75-33M706 1358l48-24M345 437l130-55M520 352l100-40" stroke="#4a505b" stroke-width="18"/>
        <path d="M355 519L683 370M384 662L703 513M398 772L718 623M412 882L731 733M427 992L748 841M442 1102L762 951M456 1212L776 1061M470 1322L790 1170M530 1436l75-33M706 1358l48-24M345 437l130-55M520 352l100-40" stroke="#828c9b" stroke-width="15"/>
        <path d="M355 516L683 367M384 659L703 510M398 769L718 620M412 879L731 730M427 989L748 838M442 1099L762 948M456 1209L776 1058M470 1319L790 1167" stroke="#9fa9b8" stroke-width="6"/>
      </g>
      <g fill="#737b88" stroke="#22252a" stroke-width="3">
        <ellipse cx="686" cy="367" rx="5" ry="9"/><ellipse cx="707" cy="511" rx="5" ry="9"/><ellipse cx="722" cy="621" rx="5" ry="9"/><ellipse cx="735" cy="731" rx="5" ry="9"/><ellipse cx="752" cy="839" rx="5" ry="9"/><ellipse cx="766" cy="949" rx="5" ry="9"/><ellipse cx="780" cy="1059" rx="5" ry="9"/><ellipse cx="794" cy="1168" rx="5" ry="9"/><ellipse cx="757" cy="1332" rx="5" ry="9"/>
        <path d="M440 355l20-10 26 12-5 24-24 8z" fill="#8992a0"/><path d="M417 373l28-12 4 10-28 12z" fill="#b9ada2"/>
      </g>

      <!-- fixed plate -->
      <g stroke="#17191c" stroke-width="3" stroke-linejoin="round">
        <path d="M195 1482l78-22 48 14v10l-74 28-52-15z" fill="#7b8491"/>
        <path d="M195 1482l52 15 74-24M247 1497v14" fill="none"/>
        <path d="M268 1455l28 8v16l-28 9z" fill="#8d97a6"/>
        <path d="M435 1560l75-30 53 10v14l-77 31-51-14z" fill="#7b8491"/>
        <path d="M435 1560l51 14 77-32M486 1574v12" fill="none"/>
        <path d="M76 398l34-27 58 16-3 18-65-20z" fill="#7b8491"/>
        <path d="M275 436l30-6 75 22 18 14 3 40-30 14z" fill="#7f8896"/>
        <path d="M372 487l27-11 2 28-28 16zM373 534l28-12 15 118-30 15zM392 674l28-14 12 94-28 14zM407 784l28-14 12 94-28 14zM421 894l28-14 12 94-28 14zM436 1004l28-14 12 94-28 14zM450 1114l28-14 12 94-28 14zM465 1224l28-14 12 94-28 14zM482 1334l27-14 27 222-25 14z" fill="#69717d"/>
      </g>
      <path d="M178 298l57 14 40 124 34 7 45 18 20 24 10 140 99 699 30 233-51-13-8-30-25-14-134-34-27 18-50-14-28-230L82 444l-6-42q5-12 24-22l65 22 8-10z" fill="#a4877d" stroke="#ff5c1c" stroke-width="4"/>

      <!-- bolt heads along the plate edges -->
      <g fill="#97a0ae" stroke="#22252a" stroke-width="3">
        <path d="M75 438l22-10 6 16-20 12zM106 692l20-10 6 14-20 12zM122 806l20-10 6 14-20 12zM136 916l20-10 6 14-20 12zM150 1026l20-10 6 14-20 12zM165 1136l20-10 6 14-20 12zM179 1246l20-10 6 14-20 12z"/>
        <g fill="none" stroke="#5b4035"><circle cx="134" cy="428" r="8"/><circle cx="276" cy="471" r="8"/><circle cx="341" cy="528" r="8"/><circle cx="362" cy="672" r="8"/><circle cx="377" cy="781" r="8"/><circle cx="392" cy="891" r="8"/><circle cx="406" cy="1001" r="8"/><circle cx="420" cy="1111" r="8"/><circle cx="434" cy="1221" r="8"/><circle cx="449" cy="1331" r="8"/></g>
      </g>
      <g fill="#8e98a7" stroke="#ff5c1c" stroke-width="4">
        <path d="M90 432q16-4 12 14M120 684q16-2 12 14M136 798q14-2 12 14M150 908q14-2 12 14M165 1018q14-2 12 14M180 1128q14-2 12 14M194 1238q14-2 12 14M105 580q18-8 12 14M148 402l6 22-10 8"/>
        <path d="M372 510q-28-6-20 16l16 6M390 655q-28-4-16 16l18-2M404 766q-26-4-14 16l16-2M418 876q-26-4-14 16l16-2M432 986q-26-4-14 16l16-2M447 1096q-26-4-14 16l16-2M462 1206q-26-4-14 16l16-2M476 1316q-26-4-14 16l16-2M286 438v24q8 10 12-2"/>
        <circle cx="283" cy="1440" r="8"/><circle cx="428" cy="1488" r="8"/>
      </g>
      <g fill="none" stroke="#4a332b" stroke-width="3">
        <path d="M182 352l14-8M204 360l14-8M187 386l14-8M207 390l14-8M190 418l16-8M210 424l16-8"/>
        <circle cx="180" cy="352" r="5"/><circle cx="200" cy="360" r="5"/><circle cx="184" cy="384" r="5"/><circle cx="206" cy="392" r="5"/><circle cx="188" cy="416" r="5"/><circle cx="210" cy="425" r="5"/>
        <g stroke="#ff5c1c"><circle cx="198" cy="342" r="5"/><circle cx="218" cy="352" r="5"/><circle cx="203" cy="376" r="5"/><circle cx="221" cy="382" r="5"/><circle cx="207" cy="409" r="5"/><circle cx="227" cy="416" r="5"/></g>
      </g>

      <!-- nozzles -->
      <g id="pair">
        <g transform="rotate(-23 104 560)"><ellipse cx="104" cy="560" rx="62" ry="97" fill="url(#ring)" stroke="#24221f" stroke-width="4"/><ellipse cx="104" cy="560" rx="52" ry="83" fill="none" stroke="#2b2a28" stroke-width="6" stroke-dasharray="6 26"/><ellipse cx="104" cy="560" rx="43" ry="69" fill="none" stroke="#1f1d1b" stroke-width="6"/><ellipse cx="102" cy="560" rx="38" ry="63" fill="url(#bore)" stroke="#3a302b" stroke-width="3"/></g>
        <g transform="rotate(-23 250 602)"><ellipse cx="250" cy="602" rx="62" ry="97" fill="#7d604e" stroke="#3d2b20" stroke-width="4"/><ellipse cx="250" cy="602" rx="52" ry="83" fill="none" stroke="#3d2b20" stroke-width="6" stroke-dasharray="6 26"/><ellipse cx="250" cy="602" rx="43" ry="69" fill="none" stroke="#3d2b20" stroke-width="5"/><ellipse cx="248" cy="602" rx="38" ry="63" fill="url(#bore2)" stroke="#5a4236" stroke-width="3"/></g>
        <g clip-path="url(#nozzles)">
          <ellipse cx="165" cy="530" rx="37" ry="64" transform="rotate(-23 165 530)" fill="url(#pipe)"/>
          <ellipse cx="308" cy="572" rx="37" ry="64" transform="rotate(-23 308 572)" fill="url(#pipe)"/>
          <g fill="#59605e" stroke="#1d201f" stroke-width="4">
            <g transform="rotate(-23 104 560)"><ellipse cx="104" cy="560" rx="62" ry="97"/><ellipse cx="104" cy="560" rx="52" ry="83" fill="none" stroke-width="6" stroke-dasharray="6 26"/><ellipse cx="104" cy="560" rx="43" ry="69" fill="#7f8580"/></g>
            <g transform="rotate(-23 250 602)"><ellipse cx="250" cy="602" rx="62" ry="97"/><ellipse cx="250" cy="602" rx="52" ry="83" fill="none" stroke-width="6" stroke-dasharray="6 26"/><ellipse cx="250" cy="602" rx="43" ry="69" fill="#7f8580"/></g>
          </g>
        </g>
        <g fill="none" stroke="#ff5c1c" stroke-width="4"><ellipse cx="165" cy="530" rx="37" ry="64" transform="rotate(-23 165 530)"/><ellipse cx="308" cy="572" rx="37" ry="64" transform="rotate(-23 308 572)"/></g>
      </g>
      <use href="#pair" transform="translate(107 801)"/>
      <circle cx="351" cy="1422" r="7" fill="none" stroke="#ff5c1c" stroke-width="4"/>
      <path d="M86 474l29 236M192 1270l24 200" stroke="#ff5c1c" stroke-width="4"/>
    </svg>

    <pre class="tolerance">  X.X+-0.1
 X.XX+-0.01
X.XXX+-0.00
 ANG.+-0.5</pre>
  </section>
</main>
</body>
</html>
```
FILE: styles.css
```css
* { box-sizing: border-box; }

body {
  margin: 0;
  height: 100vh;
  display: flex;
  flex-direction: column;
  overflow: hidden;
  font-family: "Open Sans", "Noto Sans CJK SC", sans-serif;
  font-size: 12px;
  color: #3f4445;
  background: #e8e9ed;
}

button {
  margin: 0;
  padding: 0;
  border: 0;
  background: none;
  color: inherit;
  font: inherit;
  display: flex;
  align-items: center;
  justify-content: center;
}

svg { display: block; flex: none; }
.defs { position: absolute; width: 0; height: 0; }

/* title bar */
.titlebar {
  position: relative;
  height: 32px;
  flex: none;
  display: flex;
  align-items: center;
  background: #d9dfdf;
}
.brand {
  width: 83px;
  padding-left: 8px;
  display: flex;
  align-items: center;
  gap: 3px;
  font: 19px/24px "Lato", sans-serif;
  color: #55595b;
}
.brand sup { font-size: 9px; line-height: 0; }
.quick { display: flex; align-items: center; height: 32px; color: #55595b; }
.quick button { width: 28px; height: 28px; }
.quick .more { width: 18px; }
.quick .off { color: #a4a9aa; }
.quick .custom { border-left: 1px solid #9ba1a2; width: 29px; }
.titlebar h1 {
  position: absolute;
  inset: 0 0 0 40px;
  margin: 0;
  text-align: center;
  font-size: 14px;
  line-height: 31px;
  font-weight: 400;
  pointer-events: none;
}
.window { margin-left: auto; display: flex; gap: 20px; padding-right: 3px; }

/* ribbon tabs */
.tabs {
  height: 37px;
  flex: none;
  display: flex;
  align-items: flex-end;
  gap: 1px;
  background: #3d4647;
}
.tab { height: 33px; padding: 0 25px; font-size: 13px; color: #fff; }
.tab.file { width: 70px; margin-right: -1px; padding: 0; background: linear-gradient(#66cc40, #50a835); }
.tab.active { background: #f8f9fc; color: #3f8f24; }
.tools { margin-left: auto; height: 37px; display: flex; align-items: center; }
.fold { width: 30px; height: 28px; }
.search { position: relative; width: 256px; height: 33px; }
.search input { width: 100%; height: 100%; border: 1px solid #a3adad; background: #fff; }
.search svg { position: absolute; right: 1px; top: 7px; }
.find { width: 28px; height: 35px; margin-left: 2px; background: #dddee1; border: 1px solid #a9adae; }
.learn { width: 28px; height: 28px; margin-right: 6px; }

/* ribbon */
.ribbon {
  flex: none;
  display: flex;
  padding: 2px 0;
  background: #f8f9fc;
  border-bottom: 1px solid #b1b7b9;
}
.group {
  display: flex;
  flex-direction: column;
  padding: 6px 3px 2px;
  border-right: 1px solid #bfc2c4;
}
.items { display: flex; height: 92px; }
.cmd { width: 60px; flex-direction: column; justify-content: flex-start; gap: 13px; line-height: 17px; }
.cmd.narrow { width: 44px; }
.cmd.mid { width: 54px; }
.cmd > svg { width: 32px; height: 32px; }
.cmd span { text-align: center; white-space: nowrap; }
.cmd span svg { margin: 6px auto 0; color: #595c5e; }
.name { gap: 3px; align-self: center; line-height: 20px; }
.name svg { color: #595c5e; }
.small { width: 80px; padding-left: 6px; display: flex; flex-direction: column; justify-content: space-between; }
.small button { height: 16px; justify-content: flex-start; gap: 4px; white-space: nowrap; }
.small button:last-child { margin-bottom: 14px; }

/* work area */
.work { flex: 1; min-height: 0; display: flex; }
.panel { width: 227px; flex: none; background: #f7fafb; border-right: 3px solid #d9dfdf; }
.paneltabs { display: flex; height: 30px; background: #d9dfdf; }
.paneltabs button { width: 36px; }
.paneltabs .on { padding-left: 3px; background: #f7fafb; }
.paneltools { display: flex; align-items: center; height: 28px; margin: 4px 5px 0 11px; }
.paneltools button { width: 28px; height: 28px; }
.paneltools .cube { width: 16px; }
.grip { margin: 0 14px 0 5px; }
.pressed { background: #dddfe1; border: 1px solid #a5a8aa; }
.rule { width: 1px; height: 28px; margin-left: 4px; background: #a5abad; }
.paneltools .chev { margin-left: auto; width: 24px; }
.badge { position: relative; }
.corner { position: absolute; right: 1px; bottom: 1px; }
.filter { display: flex; align-items: center; height: 33px; margin: 4px 14px 9px 14px; gap: 6px; }
.field { position: relative; width: 132px; height: 33px; }
.field input { width: 100%; height: 100%; border: 1px solid #a3b0b2; background: #fff; }
.field button { position: absolute; right: 6px; top: 8px; width: 12px; height: 17px; }
.filter > button { width: 11px; height: 24px; }
.filter > button:last-child { margin-left: auto; }

.tree, .tree ul { list-style: none; margin: 0; padding: 0; }
.tree { font-size: 13px; line-height: 26px; padding-left: 12px; }
.tree > .root > svg { display: inline-block; vertical-align: middle; margin-right: 5px; }
.tree ul { margin-left: 7px; }
.tree ul li {
  position: relative;
  display: flex;
  align-items: center;
  gap: 5px;
  height: 26px;
  padding-left: 12px;
  white-space: nowrap;
}
.tree ul li::before {
  content: "";
  position: absolute;
  left: 0;
  top: 0;
  width: 9px;
  height: 14px;
  border-left: 1px solid #bfc3c5;
  border-bottom: 1px solid #bfc3c5;
}
.tree ul li:not(.branch)::after {
  content: "";
  position: absolute;
  left: 0;
  top: 14px;
  height: 12px;
  border-left: 1px solid #bfc3c5;
}
.tree ul .branch { gap: 6px; }
.tree ul .branch::before { width: 0; height: 8px; border-bottom: 0; }
.tree ul .branch::after {
  content: "";
  position: absolute;
  left: -2px;
  top: 10px;
  border-left: 5px solid #55595b;
  border-top: 4px solid transparent;
  border-bottom: 4px solid transparent;
}
.insert {
  height: 8px;
  margin: 5px 5px 0 11px;
  border: solid #5cc83c;
  border-width: 0 2px;
  background: linear-gradient(#5cc83c, #5cc83c) center / 100% 2px no-repeat;
}

.canvas { position: relative; flex: 1; overflow: hidden; background: #e8e9ed; }
.viewbar {
  position: absolute;
  left: 603px;
  top: 7px;
  display: flex;
  gap: 3px;
  padding: 4px 4px 4px 3px;
  border: 1px solid #9da1a4;
  background: #f8f9fc;
}
.viewbar button { width: 27px; height: 26px; }
.model { position: absolute; left: 513px; top: 126px; }
.tolerance {
  position: absolute;
  left: 1523px;
  top: 699px;
  margin: 0;
  font: 300 23px/22px "Noto Sans Mono CJK SC", "Liberation Mono", monospace;
  color: #9aa0a9;
}
```
